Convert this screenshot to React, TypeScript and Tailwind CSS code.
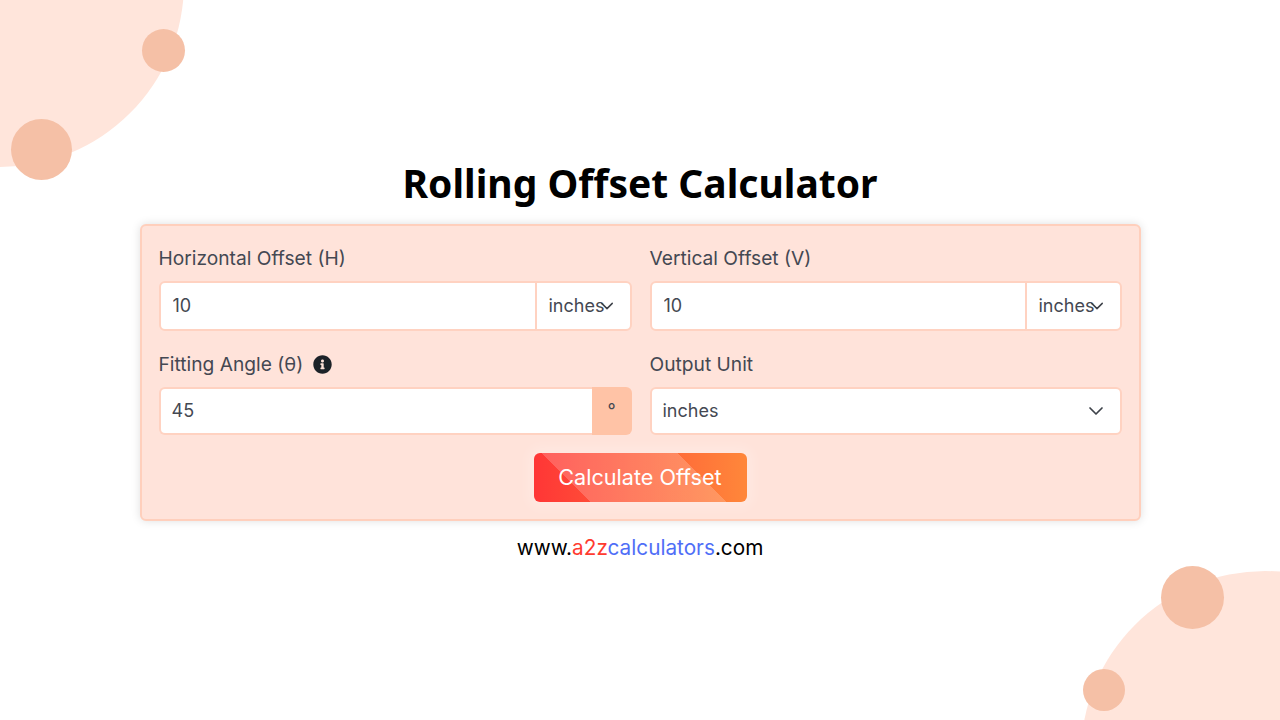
import React from "react";
import { FaInfoCircle } from "react-icons/fa";

function Chevron({ className }: { className: string }) {
    return (
        <svg viewBox="0 0 16 16" fill="none" className={className}>
            <path d="m2 5 6 6 6-6" stroke="#3d4249" strokeWidth="1.7" strokeLinecap="round" strokeLinejoin="round" />
        </svg>
    );
}

// number input with the unit select glued on the right
function UnitInput({ label }: { label: string }) {
    return (
        <div>
            <label className="block text-[19.2px] leading-[27px] text-[#444852] mb-[9px]">{label}</label>
            <div className="flex h-[50px] rounded-[6px] border-2 border-[#ffd2c1] bg-white overflow-hidden">
                <input
                    readOnly
                    value="10"
                    className="flex-1 min-w-0 pl-[12px] pb-[2px] text-[18px] text-[#444852] outline-none"
                />
                <div className="relative w-[95px] border-l-2 border-[#ffd2c1] pl-[12px] pb-[2px] flex items-center text-[18px] text-[#444852]">
                    inches
                    <Chevron className="absolute right-[16px] top-[16px] w-[14px] h-[14px]" />
                </div>
            </div>
        </div>
    );
}

export default function App() {
    return (
        <div className="relative w-[1280px] h-[720px] overflow-hidden bg-white font-['Inter',sans-serif]">
            {/* background blobs */}
            <div className="absolute left-[-184px] top-[-201px] w-[368px] h-[368px] rounded-full bg-[#ffe5db]" />
            <div className="absolute left-[142px] top-[29px] w-[43px] h-[43px] rounded-full bg-[#f5c0a6]" />
            <div className="absolute left-[11px] top-[119px] w-[61px] h-[61px] rounded-full bg-[#f5c0a6]" />
            <div className="absolute left-[1081px] top-[571px] w-[368px] h-[368px] rounded-full bg-[#ffe5db]" />
            <div className="absolute left-[1161px] top-[566px] w-[63px] h-[63px] rounded-full bg-[#f5c0a6]" />
            <div className="absolute left-[1083px] top-[669px] w-[42px] h-[42px] rounded-full bg-[#f5c0a6]" />

            <div className="relative flex flex-col items-center pt-[155px]">
                <h1 className="font-['Noto_Sans',sans-serif] text-[39px] leading-[56px] font-bold text-black">
                    Rolling Offset Calculator
                </h1>

                <div className="mt-[13px] w-[1001px] h-[297px] rounded-[6px] border-2 border-[#ffcfbc] bg-[#ffe3da] px-[17px] pt-[19px] shadow-[0_0_10px_rgba(0,0,0,0.13)]">
                    <div className="grid grid-cols-[473px_472px] gap-x-[18px] gap-y-[20px]">
                        <UnitInput label="Horizontal Offset (H)" />
                        <UnitInput label="Vertical Offset (V)" />

                        <div>
                            <label className="flex items-center gap-[10px] text-[19.2px] leading-[27px] text-[#444852] mb-[9px]">
                                Fitting Angle (θ)
                                <FaInfoCircle className="w-[19px] h-[19px] text-[#1c2228]" />
                            </label>
                            <div className="flex h-[48px]">
                                <input
                                    readOnly
                                    value="45"
                                    className="flex-1 min-w-0 rounded-l-[6px] border-2 border-r-0 border-[#ffd2c1] bg-white pl-[11px] pb-[2px] text-[18px] text-[#444852] outline-none"
                                />
                                <div className="w-[40px] rounded-r-[6px] bg-[#ffc3a6] pb-[2px] flex items-center justify-center text-[18px] text-[#444852]">
                                    °
                                </div>
                            </div>
                        </div>

                        <div>
                            <label className="block text-[19.2px] leading-[27px] text-[#444852] mb-[9px]">Output Unit</label>
                            <div className="relative flex items-center h-[48px] rounded-[6px] border-2 border-[#ffd2c1] bg-white pl-[11px] pb-[2px] text-[18px] text-[#444852]">
                                inches
                                <Chevron className="absolute right-[16px] top-[14px] w-[16px] h-[16px]" />
                            </div>
                        </div>
                    </div>

                    <div className="flex justify-center mt-[18px]">
                        <button className="w-[213px] h-[49px] rounded-[6px] text-white text-[21.6px] bg-[linear-gradient(45deg,transparent_40px,rgba(255,255,255,0.2)_40px,rgba(255,255,255,0.2)_136px,transparent_136px),linear-gradient(90deg,#ff3636,#ff873a)] shadow-[0_0_12px_6px_rgba(255,255,255,0.2)]">
                            Calculate Offset
                        </button>
                    </div>
                </div>

                <p className="mt-[12px] text-[20.75px] leading-[30px] text-black">
                    www.<span className="text-[#ff3b30]">a2z</span>
                    <span className="text-[#4f6ef7]">calculators</span>.com
                </p>
            </div>
        </div>
    );
}
